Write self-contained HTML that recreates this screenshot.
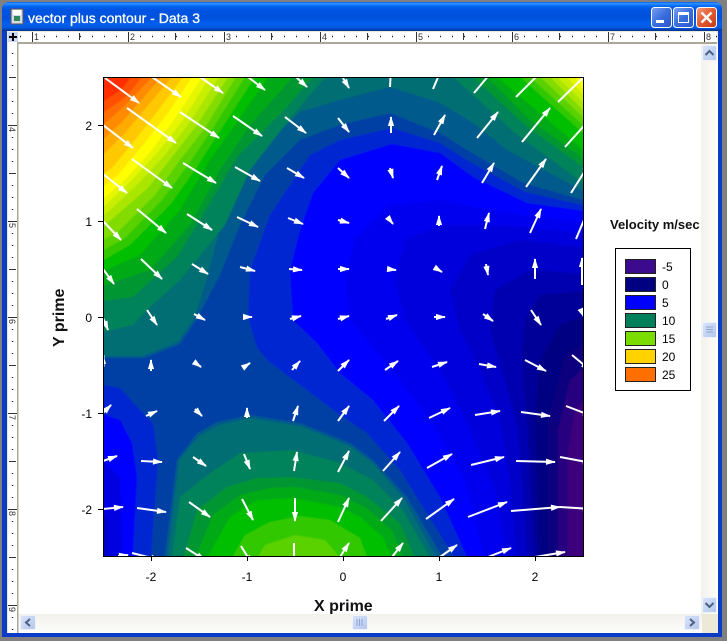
<!DOCTYPE html>
<html><head><meta charset="utf-8"><title>vector plus contour - Data 3</title>
<style>
html,body{margin:0;padding:0;background:#808080;width:727px;height:641px;overflow:hidden}
svg{display:block}
.ar path{fill:none;stroke:#fff;stroke-width:2;marker-end:url(#h)}
.t{font-family:"Liberation Sans",sans-serif;font-size:12px;fill:#000}
.b{font-family:"Liberation Sans",sans-serif;font-weight:bold;fill:#111}
.rn{font-family:"Liberation Sans",sans-serif;font-size:9px;fill:#333}
</style></head><body>
<svg xmlns="http://www.w3.org/2000/svg" width="727" height="641" viewBox="0 0 727 641">
<defs>
<marker id="h" markerUnits="userSpaceOnUse" markerWidth="12" markerHeight="8" refX="8" refY="4" orient="auto" overflow="visible"><path d="M-1,0.9 L9,4 L-1,7.1z" fill="#fff"/></marker>
<clipPath id="pc"><rect x="103" y="77" width="481" height="480"/></clipPath>
<filter id="soft" x="-2%" y="-2%" width="104%" height="104%"><feGaussianBlur stdDeviation="0.6"/></filter>
<filter id="soft2" x="-2%" y="-2%" width="104%" height="104%"><feGaussianBlur stdDeviation="0.3"/></filter>
<linearGradient id="tb" x1="0" y1="0" x2="0" y2="1">
<stop offset="0" stop-color="#0058ee"/><stop offset=".05" stop-color="#3593ff"/><stop offset=".1" stop-color="#127dff"/><stop offset=".16" stop-color="#0262ee"/><stop offset=".26" stop-color="#0054e3"/><stop offset=".56" stop-color="#0052dc"/><stop offset=".76" stop-color="#0260f0"/><stop offset=".9" stop-color="#0056dc"/><stop offset=".96" stop-color="#0040ab"/><stop offset="1" stop-color="#003092"/>
</linearGradient>
<linearGradient id="btn" x1="0" y1="0" x2="1" y2="1"><stop offset="0" stop-color="#7ba0ee"/><stop offset=".5" stop-color="#3a6ee0"/><stop offset="1" stop-color="#2a55c8"/></linearGradient>
<linearGradient id="cl" x1="0" y1="0" x2="1" y2="1"><stop offset="0" stop-color="#f0a080"/><stop offset=".5" stop-color="#e2582e"/><stop offset="1" stop-color="#c43a18"/></linearGradient>
<linearGradient id="sb" x1="0" y1="0" x2="1" y2="1"><stop offset="0" stop-color="#d8e4fa"/><stop offset="1" stop-color="#b4c6ec"/></linearGradient>
<linearGradient id="trV" x1="0" y1="0" x2="1" y2="0"><stop offset="0" stop-color="#f2f1ec"/><stop offset="1" stop-color="#fdfdfb"/></linearGradient>
<linearGradient id="trH" x1="0" y1="0" x2="0" y2="1"><stop offset="0" stop-color="#f2f1ec"/><stop offset="1" stop-color="#fdfdfb"/></linearGradient>
</defs>

<!-- window frame -->
<rect width="727" height="641" fill="#808080"/>
<path d="M2,641 V10 Q2,2 10,2 H714 Q722,2 722,10 V637 H2z" fill="#0a3cc8"/>
<path d="M2,31 V10 Q2,2 10,2 H714 Q722,2 722,10 V31z" fill="url(#tb)"/>
<rect x="2" y="637" width="725" height="4" fill="#808080"/>
<rect x="7" y="31" width="711" height="602" fill="#ece9d8"/>

<!-- title -->
<rect x="11" y="9" width="12" height="15" fill="#d8d8e0" stroke="#555" stroke-width="1"/>
<rect x="13" y="10" width="8" height="5" fill="#fff"/>
<rect x="14" y="16" width="6" height="5" fill="#2e8a5a"/>
<text x="28" y="23" font-family="'Liberation Sans',sans-serif" font-size="14" fill="#fff" stroke="#fff" stroke-width="0.3" textLength="172" lengthAdjust="spacingAndGlyphs">vector plus contour - Data 3</text>

<!-- title buttons -->
<rect x="651.5" y="7.5" width="20" height="20" rx="3" fill="url(#btn)" stroke="#fff"/>
<rect x="656" y="20" width="8" height="3" fill="#fff"/>
<rect x="673.5" y="7.5" width="20" height="20" rx="3" fill="url(#btn)" stroke="#fff"/>
<rect x="678.5" y="12.5" width="10" height="10" fill="none" stroke="#fff"/><rect x="678" y="12" width="11" height="3" fill="#fff"/>
<rect x="696.5" y="7.5" width="20" height="20" rx="3" fill="url(#cl)" stroke="#fff"/>
<path d="M701.5,12.5 L711.5,22.5 M711.5,12.5 L701.5,22.5" stroke="#fff" stroke-width="2.4" fill="none"/>

<!-- white canvas -->
<rect x="18" y="44" width="684" height="571" fill="#fff"/>

<!-- top ruler -->
<rect x="8" y="32" width="709" height="10" fill="#fff"/>
<rect x="8" y="42" width="709" height="2" fill="#aca899"/>
<line x1="20" y1="36.5" x2="717" y2="36.5" stroke="#222" stroke-width="1.4" stroke-dasharray="1 11" stroke-dashoffset="0"/>
<path d="M79.5,33V40M175.5,33V40M271.5,33V40M367.5,33V40M463.5,33V40M559.5,33V40M655.5,33V40M32.5,32V42M128.5,32V42M224.5,32V42M320.5,32V42M416.5,32V42M512.5,32V42M608.5,32V42M704.5,32V42" stroke="#333" fill="none"/>
<g class="rn"><text x="34" y="40">1</text><text x="130" y="40">2</text><text x="226" y="40">3</text><text x="322" y="40">4</text><text x="418" y="40">5</text><text x="514" y="40">6</text><text x="610" y="40">7</text><text x="706" y="40">8</text></g>
<rect x="8" y="32" width="10" height="10" fill="#c8d8f4"/>
<path d="M9,37H17M13,33V41" stroke="#000" stroke-width="2"/>

<!-- left ruler -->
<rect x="8" y="42" width="9" height="591" fill="#fff"/>
<rect x="17" y="42" width="1.5" height="591" fill="#aca899"/>
<line x1="12.5" y1="53" x2="12.5" y2="633" stroke="#222" stroke-width="1.4" stroke-dasharray="1 11"/>
<path d="M9,77.5H16M9,173.5H16M9,269.5H16M9,365.5H16M9,461.5H16M9,557.5H16M8,125.5H17M8,221.5H17M8,317.5H17M8,413.5H17M8,509.5H17M8,605.5H17" stroke="#333" fill="none"/>
<g class="rn">
<text transform="translate(9,127) rotate(90)">4</text><text transform="translate(9,223) rotate(90)">5</text><text transform="translate(9,319) rotate(90)">6</text><text transform="translate(9,415) rotate(90)">7</text><text transform="translate(9,511) rotate(90)">8</text><text transform="translate(9,607) rotate(90)">9</text>
</g>

<!-- contour plot -->
<g clip-path="url(#pc)">
<g filter="url(#soft)">
<rect x="95" y="70" width="497" height="495" fill="#0000ff"/>
<polygon fill="#0000ee" points="600,225 500,212 440,200 390,205 355,240 345,280 350,320 385,360 430,420 465,480 488,570 600,570"/>
<polygon fill="#0000dc" points="600,235 500,225 440,225 405,240 395,280 405,320 440,370 470,430 495,490 510,570 600,570"/>
<polygon fill="#0000c8" points="600,250 520,240 470,255 450,290 460,330 480,370 500,420 510,480 518,570 600,570"/>
<polygon fill="#0000b0" points="600,275 530,270 495,290 490,330 505,380 518,430 522,480 528,570 600,570"/>
<polygon fill="#000098" points="600,290 540,295 525,320 522,360 527,420 530,480 535,570 600,570"/>
<polygon fill="#000082" points="600,310 560,325 540,360 535,420 540,570 600,570"/>
<polygon fill="#10007e" points="600,335 565,355 548,420 548,570 600,570"/>
<polygon fill="#28007e" points="600,355 570,380 558,430 558,570 600,570"/>
<polygon fill="#3c007c" points="600,385 575,410 568,450 568,570 600,570"/>
<polygon fill="#0000e0" points="90,450 120,477 123,570 90,570"/>
<polygon fill="#0000c8" points="90,500 108,520 108,570 90,570"/>

<polygon fill="#0028d2" points="90,60 600,60 600,213 527,203 473,177 440,153 392,144 340,160 313,193 300,230 290,270 293,320 317,343 340,373 373,400 407,443 440,497 473,570 132,570 137,477 132,443 120,420 90,410"/>
<polygon fill="#0041a5" points="90,60 600,60 600,209 525,192 470,162 440,143 392,128 340,140 310,155 270,215 250,270 248,317 257,347 267,360 300,385 340,415 367,433 400,470 462,570 150,570 158,460 153,423 137,407 120,388 90,383"/>
<polygon fill="#005a8c" points="90,60 600,60 600,205 523,183 467,150 440,133 390,113 340,125 300,140 265,175 240,225 220,275 198,317 180,344 145,358 90,358"/>
<polygon fill="#005a8c" points="163,570 177,460 197,433 217,422 250,415 300,423 350,443 373,460 407,497 450,570"/>
<polygon fill="#006e73" points="90,60 600,60 600,200 507,150 473,123 440,103 390,87 340,100 300,112 255,155 225,210 205,285 195,317 178,342 143,356 90,356"/>
<polygon fill="#006e73" points="166,570 179,460 199,436 219,425 250,418 300,426 350,446 373,463 405,500 443,570"/>

<polygon fill="#00825a" points="90,60 325,60 325,77 285,125 250,170 225,225 180,280 147,310 133,325 90,335"/>
<polygon fill="#00825a" points="453,60 600,60 600,183 583,183 515,133 453,77"/>
<polygon fill="#00825a" points="170,570 180,497 210,473 240,453 293,450 340,463 373,480 403,510 437,570"/>
<polygon fill="#009632" points="90,60 313,60 313,77 287,107 237,157 210,203 177,257 133,297 90,303"/>
<polygon fill="#009632" points="473,60 600,60 600,167 583,167 525,125 473,77"/>
<polygon fill="#009632" points="180,570 197,510 227,487 257,478 290,477 340,483 367,497 400,523 420,570"/>
<polygon fill="#00aa14" points="90,60 293,60 293,77 250,125 220,170 190,225 150,270 90,290"/>
<polygon fill="#00aa14" points="487,60 600,60 600,158 583,158 530,120 487,77"/>
<polygon fill="#00aa14" points="190,570 213,515 240,495 270,488 295,487 340,495 365,507 392,530 408,570"/>
<polygon fill="#00be00" points="90,60 268,60 268,77 235,125 210,160 180,210 140,255 90,277"/>
<polygon fill="#00be00" points="497,60 600,60 600,150 583,150 497,77"/>
<polygon fill="#00be00" points="200,570 230,517 257,500 293,498 340,507 360,517 383,537 397,570"/>
<polygon fill="#32c800" points="90,60 255,60 255,77 222,128 195,170 170,205 130,245 90,268"/>
<polygon fill="#32c800" points="520,60 600,60 600,133 583,133 520,77"/>
<polygon fill="#32c800" points="225,570 245,535 270,522 300,516 330,520 360,538 372,570"/>
<polygon fill="#5ad200" points="90,60 245,60 245,77 213,128 188,165 162,200 125,238 90,258"/>
<polygon fill="#5ad200" points="530,60 600,60 600,125 583,125 530,77"/>
<polygon fill="#5ad200" points="250,570 265,545 295,535 325,540 350,570"/>
<polygon fill="#82dc00" points="90,60 236,60 236,77 205,128 180,160 155,195 120,230 90,248"/>
<polygon fill="#82dc00" points="540,60 600,60 600,117 583,117 540,77"/>
<polygon fill="#aae600" points="90,60 228,60 228,77 197,125 172,157 148,188 90,238"/>
<polygon fill="#aae600" points="550,60 600,60 600,110 583,110 550,77"/>
<polygon fill="#c8ee00" points="90,60 219,60 219,77 190,122 165,155 140,182 90,229"/>
<polygon fill="#c8ee00" points="557,60 600,60 600,102 583,102 557,77"/>
<polygon fill="#e6f500" points="90,60 210,60 210,77 183,120 158,152 132,180 90,220"/>
<polygon fill="#e6f500" points="567,60 600,60 600,95 583,95 567,77"/>
<polygon fill="#ffff00" points="90,60 202,60 202,77 176,117 152,150 125,180 90,210"/>
<polygon fill="#ffff00" points="575,60 600,60 600,88 583,88 575,77"/>
<polygon fill="#ffe600" points="90,60 192,60 192,77 168,113 143,145 118,175 90,197"/>
<polygon fill="#ffc800" points="90,60 183,60 183,77 160,108 135,140 112,168 90,183"/>
<polygon fill="#ffaa00" points="90,60 172,60 172,77 150,103 125,133 90,168"/>
<polygon fill="#ff8c00" points="90,60 162,60 162,77 143,98 122,122 90,152"/>
<polygon fill="#ff6e00" points="90,60 152,60 152,77 136,94 118,112 90,136"/>
<polygon fill="#ff5000" points="90,60 142,60 142,77 127,96 90,122"/>
<polygon fill="#ff2d00" points="90,60 131,60 131,77 121,90 90,110"/>
</g>
</g>

<!-- arrows -->
<g clip-path="url(#pc)">
<g class="ar" filter="url(#soft2)">
<path d="M105,78L139,103"/><path d="M152,77L181,97"/><path d="M200,77L223,93"/><path d="M248,77L265,90"/><path d="M296,77L307,87"/><path d="M343,78L349,88"/>
<path d="M390,87L391,68"/><path d="M433,89L442,68"/><path d="M474,93L495,68"/><path d="M516,97L545,68"/><path d="M558,102L592,69"/>
<path d="M103,125L133,148"/><path d="M127,108L176,143"/><path d="M180,112L219,138"/><path d="M233,116L262,136"/><path d="M285,117L306,133"/><path d="M338,118L349,132"/>
<path d="M391,133L391,117"/><path d="M434,135L445,115"/><path d="M477,138L498,112"/><path d="M522,142L550,108"/><path d="M565,147L592,117"/>
<path d="M103,174L127,193"/><path d="M132,159L172,188"/><path d="M183,163L216,183"/><path d="M235,167L260,181"/><path d="M287,168L304,178"/><path d="M338,168L349,178"/>
<path d="M390,168L393,178"/><path d="M437,180L442,166"/><path d="M482,183L494,163"/><path d="M526,187L546,159"/><path d="M571,193L590,163"/>
<path d="M103,221L121,240"/><path d="M137,209L166,233"/><path d="M187,214L212,230"/><path d="M237,217L258,227"/><path d="M288,218L303,224"/><path d="M338,220L349,223"/>
<path d="M389,219L393,224"/><path d="M439,226L439,216"/><path d="M485,229L489,213"/><path d="M530,233L541,209"/><path d="M576,239L589,208"/>
<path d="M103,269L114,284"/><path d="M141,259L162,279"/><path d="M192,264L208,274"/><path d="M240,267L255,271"/><path d="M289,269L302,270"/><path d="M338,269L349,269"/>
<path d="M387,269L396,270"/><path d="M437,269L442,272"/><path d="M486,264L488,275"/><path d="M535,279L535,259"/><path d="M582,285L582,258"/>
<path d="M103,318L108,330"/><path d="M147,310L157,325"/><path d="M194,314L205,320"/><path d="M243,317L252,317"/><path d="M290,319L301,316"/><path d="M338,319L349,316"/>
<path d="M386,319L397,315"/><path d="M434,317L445,317"/><path d="M483,314L493,321"/><path d="M531,310L541,325"/><path d="M581,310L584,317"/>
<path d="M103,367L103,355" style="stroke-width:3"/><path d="M151,371L151,360"/><path d="M194,362L201,367"/><path d="M244,367L250,363"/><path d="M292,370L300,361"/><path d="M338,371L349,360"/>
<path d="M385,370L398,361"/><path d="M432,367L447,362"/><path d="M479,364L496,367"/><path d="M525,360L546,371"/><path d="M572,355L590,370"/>
<path d="M103,413L111,405"/><path d="M146,416L157,411"/><path d="M195,409L202,416"/><path d="M247,418L247,408"/><path d="M293,421L298,406"/><path d="M338,421L349,406"/>
<path d="M384,421L399,406"/><path d="M429,418L450,408"/><path d="M475,415L500,411"/><path d="M521,412L550,416"/><path d="M566,406L592,416"/>
<path d="M103,461L117,456"/><path d="M141,461L162,462"/><path d="M193,457L206,466"/><path d="M244,454L250,469"/><path d="M294,471L297,452"/><path d="M338,472L349,451"/>
<path d="M383,471L400,452"/><path d="M427,468L452,454"/><path d="M471,465L504,457"/><path d="M516,461L555,462"/><path d="M560,457L592,463"/>
<path d="M103,509L123,507"/><path d="M137,508L166,512"/><path d="M189,502L210,517"/><path d="M242,499L253,520"/><path d="M295,498L295,521"/><path d="M338,522L349,498"/>
<path d="M381,521L402,498"/><path d="M426,519L454,499"/><path d="M468,517L507,502"/><path d="M511,511L560,507"/><path d="M560,507L592,509"/>
<path d="M118,556L128,555"/><path d="M132,553L160,560"/><path d="M186,548L205,560"/><path d="M241,546L252,564"/><path d="M294,543L294,566"/><path d="M340,557L349,543"/>
<path d="M392,557L403,543"/><path d="M440,557L457,545"/><path d="M488,557L511,548"/><path d="M535,557L565,552"/>
</g>
</g>

<!-- axes -->
<rect x="103.5" y="77.5" width="480" height="479" fill="none" stroke="#000"/>
<path d="M151.5,556V561M247.5,556V561M343.5,556V561M439.5,556V561M535.5,556V561M98,125.5H103M98,221.5H103M98,317.5H103M98,413.5H103M98,509.5H103" stroke="#000" fill="none"/>
<g class="t" text-anchor="end"><text x="92" y="130">2</text><text x="92" y="226">1</text><text x="92" y="322">0</text><text x="92" y="418">-1</text><text x="92" y="514">-2</text></g>
<g class="t" text-anchor="middle"><text x="151" y="581">-2</text><text x="247" y="581">-1</text><text x="343" y="581">0</text><text x="439" y="581">1</text><text x="535" y="581">2</text></g>
<text x="314" y="611" class="b" font-size="16">X prime</text>
<text transform="translate(64,347) rotate(-90)" class="b" font-size="16">Y prime</text>

<!-- legend -->
<text x="610" y="229" class="b" font-size="13">Velocity m/sec</text>
<rect x="615.5" y="248.5" width="75" height="142" fill="#fff" stroke="#000"/>
<g stroke="#222">
<rect x="625.5" y="259.5" width="30" height="14" fill="#3c0a8c"/>
<rect x="625.5" y="277.5" width="30" height="14" fill="#000080"/>
<rect x="625.5" y="295.5" width="30" height="14" fill="#0000ff"/>
<rect x="625.5" y="313.5" width="30" height="14" fill="#00805a"/>
<rect x="625.5" y="331.5" width="30" height="14" fill="#7adc00"/>
<rect x="625.5" y="349.5" width="30" height="14" fill="#ffd200"/>
<rect x="625.5" y="367.5" width="30" height="14" fill="#ff6e00"/>
</g>
<g class="t"><text x="662" y="271">-5</text><text x="662" y="289">0</text><text x="662" y="307">5</text><text x="662" y="325">10</text><text x="662" y="343">15</text><text x="662" y="361">20</text><text x="662" y="379">25</text></g>

<!-- vertical scrollbar -->
<rect x="701" y="44" width="17" height="571" fill="url(#trV)"/>
<rect x="702.5" y="45.5" width="14" height="15" rx="1.5" fill="url(#sb)" stroke="#eef2fb"/>
<path d="M705.5,55L709.5,51L713.5,55" stroke="#4d6185" stroke-width="2" fill="none"/>
<rect x="702.5" y="322.5" width="14" height="15" rx="1.5" fill="url(#sb)" stroke="#eef2fb"/>
<path d="M706,327H713M706,329.5H713M706,332H713" stroke="#8ea4d4" fill="none"/>
<rect x="702.5" y="597.5" width="14" height="15" rx="1.5" fill="url(#sb)" stroke="#eef2fb"/>
<path d="M705.5,603L709.5,607L713.5,603" stroke="#4d6185" stroke-width="2" fill="none"/>

<!-- horizontal scrollbar -->
<rect x="18.5" y="614" width="684" height="19" fill="url(#trH)"/>
<rect x="20.5" y="615.5" width="15" height="14" rx="1.5" fill="url(#sb)" stroke="#eef2fb"/>
<path d="M30,619L26,622.5L30,626" stroke="#4d6185" stroke-width="2" fill="none"/>
<rect x="352.5" y="615.5" width="15" height="14" rx="1.5" fill="url(#sb)" stroke="#eef2fb"/>
<path d="M357,619V626M359.5,619V626M362,619V626" stroke="#8ea4d4" fill="none"/>
<rect x="684.5" y="615.5" width="15" height="14" rx="1.5" fill="url(#sb)" stroke="#eef2fb"/>
<path d="M690,619L694,622.5L690,626" stroke="#4d6185" stroke-width="2" fill="none"/>
<rect x="702" y="614" width="16" height="19" fill="#ece9d8"/>
</svg>
</body></html>
